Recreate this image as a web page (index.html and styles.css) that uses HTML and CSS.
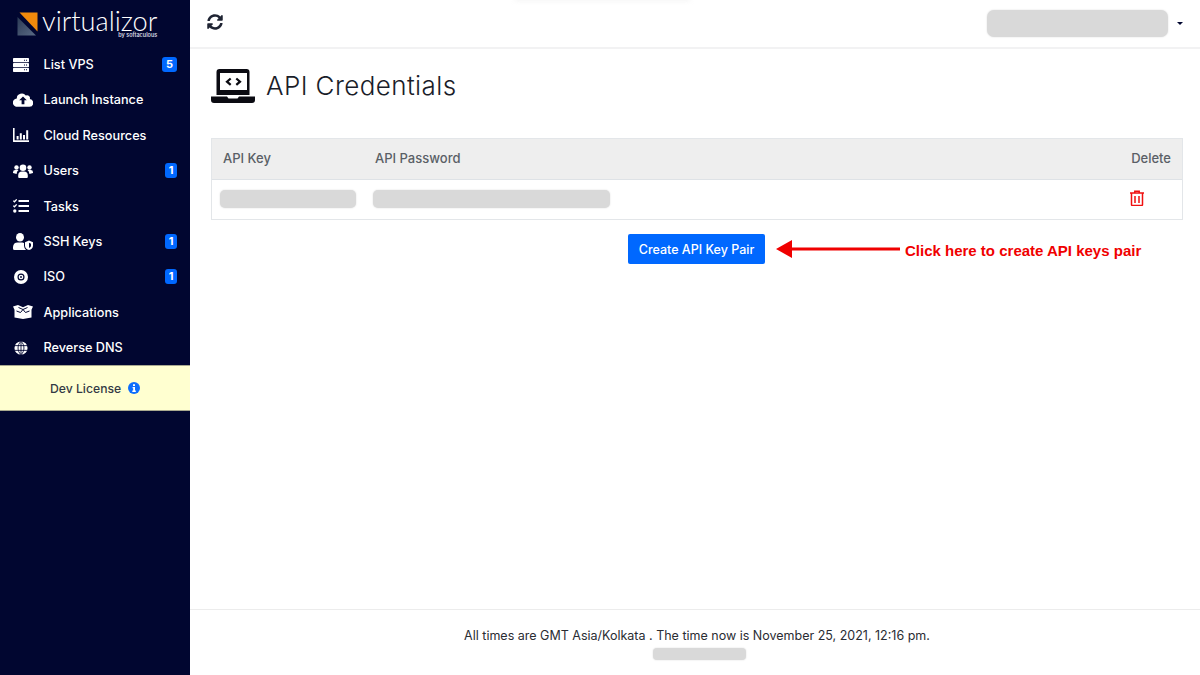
FILE: index.html
```html
<!DOCTYPE html>
<html lang="en">
<head>
<meta charset="utf-8">
<title>API Credentials</title>
<link rel="stylesheet" href="styles.css">
</head>
<body>
<aside class="sidebar">
  <div class="brand">
    <svg class="brand-mark" viewBox="0 0 21 24" width="21" height="24">
      <defs><linearGradient id="bg" x1="0" y1="0" x2="1" y2="1"><stop offset="0" stop-color="#2b3a55"/><stop offset="1" stop-color="#5a6a84"/></linearGradient></defs>
      <path d="M2.500 0.500H20.500V19.500Z" fill="#f28a0c"/>
      <path d="M0.500 5V23.500H19Z" fill="url(#bg)"/>
    </svg>
    <div class="brand-text">
      <span class="brand-name">virtualizor</span>
      <span class="brand-by">by softaculous</span>
    </div>
  </div>
  <nav class="menu">
    <a class="item"><svg class="ico ico-n" viewBox="0 0 16 14"><rect y="0" width="16" height="4.300" rx=".7" fill="#fff"/><rect y="4.900" width="16" height="4.200" rx=".7" fill="#fff"/><rect y="9.700" width="16" height="4.300" rx=".7" fill="#fff"/><path d="M11 1.700h1v1h-1zM13 1.700h1v1h-1zM11 6.500h1v1h-1zM13 6.500h1v1h-1zM11 11.300h1v1h-1zM13 11.300h1v1h-1z" fill="#010630"/></svg><span class="label">List VPS</span><span class="badge badge-wide">5</span></a>
    <a class="item"><svg class="ico" viewBox="0 0 20 15" preserveAspectRatio="none"><path d="M16.800 6.500A3 3 0 0 0 12.800 2.700 5 5 0 0 0 3.800 5.500v.3A4.500 4.500 0 0 0 5 14.800h11.500a4.200 4.200 0 0 0 .3-8.300z" fill="#fff"/><path d="M10 3.800l3.800 3.900h-2.400v4.300H8.600V7.700H6.200z" fill="#010630"/></svg><span class="label">Launch Instance</span></a>
    <a class="item"><svg class="ico ico-n" viewBox="0 0 20 16" preserveAspectRatio="none"><path d="M0 0h2v14h18v2H1a1 1 0 0 1-1-1zM4.500 9h2.500v4H4.500zM8.500 6h2.500v7H8.500zM12.500 8h2.500v5h-2.500zM16.500 2.500H19V13h-2.500z" fill="#fff"/></svg><span class="label">Cloud Resources</span></a>
    <a class="item"><svg class="ico" viewBox="0 0 20 14"><circle cx="10" cy="3.800" r="3.300" fill="#fff"/><circle cx="3.500" cy="3.500" r="2.200" fill="#fff"/><circle cx="16.500" cy="3.500" r="2.200" fill="#fff"/><path d="M5.200 13v-1.800a3.800 3.800 0 0 1 3.800-3.600h2a3.800 3.800 0 0 1 3.800 3.600V13a1 1 0 0 1-1 1H6.200a1 1 0 0 1-1-1zM0 9v-.8a2.300 2.300 0 0 1 2.300-2.300h2.200a3.100 3.100 0 0 1 1 .2 5 5 0 0 0-1.900 3.900zM20 9v-.8a2.300 2.300 0 0 0-2.300-2.300h-2.200a3.100 3.100 0 0 0-1 .2 5 5 0 0 1 1.900 3.900z" fill="#fff"/></svg><span class="label">Users</span><span class="badge">1</span></a>
    <a class="item"><svg class="ico ico-n" viewBox="0 0 16 14"><path d="M5.500 1h10.500v2H5.500zM5.500 6h10.500v2H5.500zM5.500 11h10.500v2H5.500z" fill="#fff"/><path d="M.300 1.600l1.200 1.200L3.700.400M.300 6.600l1.200 1.200 2.200-2.400" stroke="#fff" stroke-width="1.300" fill="none"/><circle cx="1.800" cy="12" r="1.700" fill="#fff"/></svg><span class="label">Tasks</span></a>
    <a class="item"><svg class="ico ico-tall" viewBox="0 0 20 16" preserveAspectRatio="none"><circle cx="7" cy="4" r="4" fill="#fff"/><path d="M0 14.500v-1.300A4.700 4.700 0 0 1 4.700 9h4.600a5 5 0 0 1 1.700.3V12a5.500 5.500 0 0 0 2 4H1.500A1.500 1.500 0 0 1 0 14.500z" fill="#fff"/><path d="M16 7l4 1.700V12c0 2-1.700 3.500-4 4-2.300-.5-4-2-4-4V8.700z" fill="#fff"/><path d="M16 9.200l2 .8v2c0 1-.9 1.700-2 2z" fill="#010630"/></svg><span class="label">SSH Keys</span><span class="badge">1</span></a>
    <a class="item"><svg class="ico ico-n" viewBox="0 0 15 15"><circle cx="7.500" cy="7.500" r="7.500" fill="#fff"/><circle cx="7.500" cy="7.500" r="3.800" fill="#010630"/><circle cx="7.500" cy="7.500" r="2.500" fill="#fff"/><circle cx="7.500" cy="7.500" r="1" fill="#010630"/></svg><span class="label">ISO</span><span class="badge">1</span></a>
    <a class="item"><svg class="ico" viewBox="0 0 20 14"><path d="M0 1.500L5 0l5 2.200L15 0l5 1.500-1.500 3.200v7.800L10 14l-8.500-1.500V4.700z" fill="#fff"/><path d="M5.500 2.500L10 4.500l4.500-2M10 4.500l-2.500 3-4-1.500M10 4.500l2.500 3 4-1.500" stroke="#010630" stroke-width="1" fill="none"/></svg><span class="label">Applications</span></a>
    <a class="item"><svg class="ico ico-n" viewBox="0 0 16 16"><circle cx="8" cy="8" r="7.500" fill="#fff"/><path d="M.500 5.300h15M.500 10.700h15M8 .500v15M8 .500C3.500 4 3.500 12 8 15.500M8 .500c4.500 3.500 4.500 11.500 0 15" stroke="#010630" stroke-width="1" fill="none"/></svg><span class="label">Reverse DNS</span></a>
  </nav>
  <div class="license">
    <span>Dev License</span>
    <svg class="info" viewBox="0 0 12 12"><circle cx="6" cy="6" r="6" fill="#0d6efd"/><path d="M5 2.200h2v1.700H5zM4.600 5h2.400v3.600h.8V10H4.300V8.600h.9V6.300h-.6z" fill="#fff"/></svg>
  </div>
</aside>
<div class="main">
  <header class="topbar">
    <svg class="refresh" viewBox="0 0 512 512"><path d="M370.720 133.280C339.458 104.008 298.888 87.962 255.848 88c-77.458.068-144.328 53.178-162.791 126.850-1.344 5.363-6.122 9.150-11.651 9.150H24.103c-7.498 0-13.194-6.807-11.807-14.176C33.933 94.924 134.813 8 256 8c66.448 0 126.791 26.136 171.315 68.685L463.030 40.970C478.149 25.851 504 36.559 504 57.941V192c0 13.255-10.745 24-24 24H345.941c-21.382 0-32.090-25.851-16.971-40.971l41.750-41.749zM32 296h134.059c21.382 0 32.090 25.851 16.971 40.971l-41.750 41.750c31.262 29.273 71.835 45.319 114.876 45.280 77.418-.070 144.315-53.144 162.787-126.849 1.344-5.363 6.122-9.150 11.651-9.150h57.304c7.498 0 13.194 6.807 11.807 14.176C478.067 417.076 377.187 504 256 504c-66.448 0-126.791-26.136-171.315-68.685L48.970 471.030C33.851 486.149 8 475.441 8 454.059V320c0-13.255 10.745-24 24-24z" fill="#1f2433"/></svg>
    <div class="user"><span class="blur blur-user"></span><span class="caret"></span></div>
    <span class="top-smear"></span>
  </header>
  <div class="content">
    <div class="page-title">
      <svg class="laptop" viewBox="0 0 44 34"><path fill-rule="evenodd" d="M8.500 0h27a3 3 0 0 1 3 3v23h-33V3a3 3 0 0 1 3-3zM9 4v17h27V4z" fill="#0b0b12"/><path d="M0 27.500h16l1.500 2h9l1.500-2h16v3.500a3 3 0 0 1-3 3H3a3 3 0 0 1-3-3z" fill="#0b0b12"/><path d="M19.700 9.500L16 12.700l3.700 3.200M25.300 9.500l3.700 3.200-3.700 3.200" stroke="#0b0b12" stroke-width="2.200" fill="none"/></svg>
      <h1>API Credentials</h1>
    </div>
    <div class="table">
      <div class="row head">
        <span class="col-key">API Key</span>
        <span class="col-pass">API Password</span>
        <span class="col-del">Delete</span>
      </div>
      <div class="row body">
        <span class="blur blur-key"></span>
        <span class="blur blur-pass"></span>
        <svg class="trash" viewBox="0 0 14 16"><path d="M4.800 2.500V1.200h4.400v1.300M0 3h14M1.500 3.500v11a1 1 0 0 0 1 1h9a1 1 0 0 0 1-1v-11M5 6v7M9 6v7" stroke="#f01010" stroke-width="1.500" fill="none"/></svg>
      </div>
    </div>
    <div class="action">
      <button class="btn" type="button">Create API Key Pair</button>
      <div class="note">
        <svg class="arrow" viewBox="0 0 124 20" width="124" height="20"><path d="M0 10L16 1V8.500H124V11.500H16V19z" fill="#f00000"/></svg>
        <span class="note-text">Click here to create API keys pair</span>
      </div>
    </div>
  </div>
  <footer class="footer">
    <p>All times are GMT Asia/Kolkata . The time now is November 25, 2021, 12:16 pm.</p>
    <span class="blur blur-foot"></span>
  </footer>
</div>
</body>
</html>
```

FILE: styles.css
```css
* { box-sizing: border-box; }
html, body { height: 100%; }
body {
  margin: 0;
  display: flex;
  height: 675px;
  overflow: hidden;
  background: #fff;
  color: #212529;
  font-family: Inter, "Noto Sans", sans-serif;
}
.sidebar {
  width: 190px;
  flex: none;
  background: #010630;
  color: #fff;
  display: flex;
  flex-direction: column;
}
.brand {
  height: 46.900px;
  display: flex;
  align-items: flex-start;
  padding: 12px 0 0 17px;
  gap: 4px;
}
.brand-text { display: flex; flex-direction: column; align-items: flex-end; margin-top: -3px; }
.brand-name {
  font-family: Lato, sans-serif;
  font-weight: 300;
  font-size: 27.200px;
  line-height: 23px;
  color: #fff;
}
.brand-by { font-size: 5.500px; line-height: 6px; font-weight: 600; color: #d5d8e0; }
.menu { display: flex; flex-direction: column; }
.item {
  height: 35.375px;
  display: flex;
  align-items: center;
  padding: 0 13px;
  font-size: 12.700px;
  font-weight: 500;
  color: #fff;
}
.ico { width: 20px; height: 14px; flex: none; }
.ico-n { width: 16px; margin-right: 4px; }
.ico-tall { height: 17px; }
.label { margin-left: 10.500px; flex: 1; }
.badge {
  flex: none;
  width: 12px;
  height: 15px;
  border-radius: 3px;
  background: #0068ff;
  font-size: 11px;
  font-weight: 700;
  line-height: 15px;
  text-align: center;
  color: #fff;
}
.badge-wide { width: 15px; }
.license {
  margin-top: .100px;
  height: 46px;
  background: #ffffd0;
  color: #333a45;
  border-top: 1px solid #a9a98f;
  border-bottom: 1px solid #a9a98f;
  display: flex;
  align-items: center;
  padding-left: 50px;
  gap: 7px;
  font-size: 12.200px;
  font-weight: 500;
}
.info { width: 12px; height: 12px; }
.main { flex: 1; min-width: 0; display: flex; flex-direction: column; }
.topbar {
  position: relative;
  height: 49px;
  flex: none;
  display: flex;
  align-items: center;
  justify-content: space-between;
  padding: 0 17px;
  border-bottom: 2px solid #f2f2f3;
}
.refresh { width: 16px; height: 16px; margin-bottom: 3px; }
.user { display: flex; align-items: center; gap: 9px; }
.caret {
  width: 0; height: 0;
  border-left: 3.500px solid transparent;
  border-right: 3.500px solid transparent;
  border-top: 3.500px solid #010630;
}
.blur { display: block; background: #d9d9d9; border-radius: 5px; box-shadow: 0 0 2px #dcdcdc; }
.blur-user { width: 181px; height: 27px; border-radius: 7px; }
.top-smear {
  position: absolute;
  left: 325px; top: -2px;
  width: 175px; height: 3px;
  background: #f2f2f2;
  filter: blur(2px);
}
.content { flex: 1; padding: 20px 17px 0 21px; display: flex; flex-direction: column; }
.page-title { display: flex; align-items: center; gap: 12px; height: 34px; }
.laptop { width: 44px; height: 34px; flex: none; }
h1 { margin: 0 0 2px -1px; font-size: 26px; letter-spacing: .4px; font-weight: 300; color: #1a1d29; }
.table { margin-top: 35px; border: 1px solid #e3e6e9; }
.row { display: flex; align-items: center; }
.head {
  height: 41px;
  background: #eeeeee;
  border-bottom: 1px solid #dee2e6;
  font-size: 13px;
  color: #5a5f66;
  font-weight: 450;
  padding: 0 11px 2px;
}
.col-key { width: 152px; }
.col-pass { flex: 1; }
.body { height: 39px; padding: 0 38px 2px 8px; }
.blur-key { width: 136px; height: 18px; }
.blur-pass { width: 237px; height: 18px; margin-left: 17px; }
.trash { width: 14px; height: 16px; margin: 0 0 1px auto; }
.action { position: relative; display: flex; justify-content: center; margin-top: 14px; padding-right: 1px; }
.btn {
  width: 137px;
  height: 30px;
  border: 0;
  border-radius: 2px;
  background: #0068ff;
  color: #fff;
  padding: 0;
  font: 500 12.500px Inter, sans-serif;
}
.note {
  position: absolute;
  left: 565px; top: 5px;
  display: flex;
  align-items: center;
  gap: 5px;
}
.note-text { margin-top: 2px; font: 700 15px "Liberation Sans", sans-serif; color: #f00000; white-space: nowrap; }
.footer {
  height: 66px;
  flex: none;
  border-top: 1px solid #ececec;
  display: flex;
  flex-direction: column;
  align-items: center;
  padding: 18px 0 0 4px;
}
.footer p { margin: 0; font-size: 12.500px; line-height: 15px; color: #2a2d33; }
.blur-foot { width: 93px; height: 12px; margin: 5px 0 0 4px; border-radius: 4px; }
```
